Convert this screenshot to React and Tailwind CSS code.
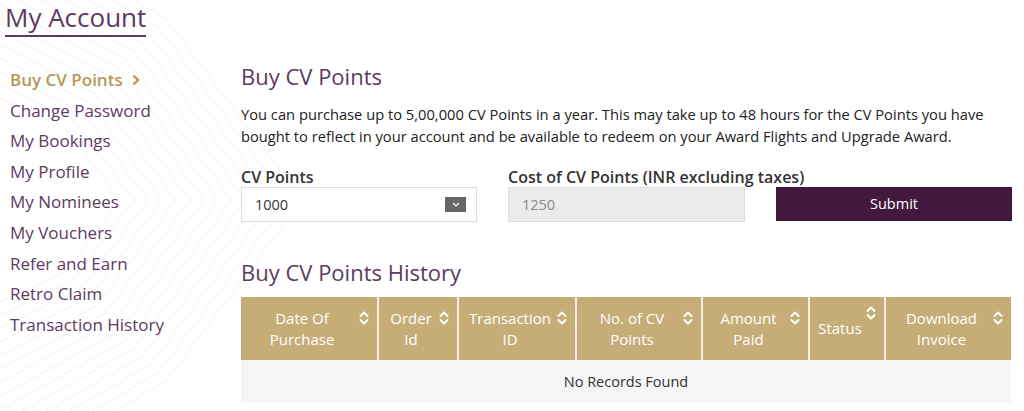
import React from 'react';

const menuItems = [
  'Buy CV Points',
  'Change Password',
  'My Bookings',
  'My Profile',
  'My Nominees',
  'My Vouchers',
  'Refer and Earn',
  'Retro Claim',
  'Transaction History',
];

const columns = [
  { label: ['Date Of', 'Purchase'], w: 'w-[136px]' },
  { label: ['Order', 'Id'], w: 'w-[80px]' },
  { label: ['Transaction', 'ID'], w: 'w-[118px]' },
  { label: ['No. of CV', 'Points'], w: 'w-[126px]' },
  { label: ['Amount', 'Paid'], w: 'w-[107px]' },
  { label: ['Status'], w: 'w-[76px]' },
  { label: ['Download', 'Invoice'], w: 'flex-1' },
];

function SortIcon() {
  return (
    <svg width="10" height="16" viewBox="0 0 10 16" className="shrink-0">
      <path d="M1.5 6 L5 2.5 L8.5 6" fill="none" stroke="#fff" strokeWidth="2" strokeLinecap="round" strokeLinejoin="round" />
      <path d="M1.5 10 L5 13.5 L8.5 10" fill="none" stroke="#fff" strokeWidth="2" strokeLinecap="round" strokeLinejoin="round" />
    </svg>
  );
}

// faint line pattern behind the menu
function SidebarPattern() {
  const lines = [];
  for (let i = 0; i < 14; i++) {
    const r = 120 + i * 14;
    lines.push(
      <polygon
        key={i}
        points={`${-40},${200 - r} ${r * 0.55},${200 - r * 0.6} ${r},${200} ${r * 0.55},${200 + r * 0.6} ${-40},${200 + r}`}
        fill="none"
        stroke="#f3f3f3"
        strokeWidth="1"
      />
    );
  }
  return (
    <svg className="absolute left-0 top-0 pointer-events-none" width="300" height="411" viewBox="0 0 300 411">
      {lines}
    </svg>
  );
}

export default function App() {
  return (
    <div className="relative w-[1024px] h-[411px] overflow-hidden bg-white" style={{ fontFamily: '"Open Sans", sans-serif' }}>
      <SidebarPattern />
      <div className="relative">
        <div className="pl-[5px]">
          <h1 className="inline-block text-[26px] leading-[34px] text-[#5c3b5f] border-b-2 border-[#5c3b5f] pb-[1px]">My Account</h1>
        </div>

        <div className="flex">
          {/* menu */}
          <ul className="w-[241px] shrink-0 pl-[10px] pt-[28px]">
            {menuItems.map((item, i) => (
              <li
                key={item}
                className={
                  i === 0
                    ? 'flex items-center gap-[9px] text-[17px] leading-[30.6px] font-semibold text-[#b69755]'
                    : 'text-[17px] leading-[30.6px] text-[#5c3b5f]'
                }
              >
                {item}
                {i === 0 && (
                  <svg width="8" height="12" viewBox="0 0 8 12">
                    <path d="M1.5 1.5 L6 6 L1.5 10.5" fill="none" stroke="#b69755" strokeWidth="2.4" />
                  </svg>
                )}
              </li>
            ))}
          </ul>

          {/* content */}
          <div className="w-[771px] pt-[24px]">
            <h2 className="text-[22px] leading-[30px] text-[#5c3b5f]">Buy CV Points</h2>
            <p className="mt-[12px] text-[14.7px] leading-[22px] text-[#222]">
              You can purchase up to 5,00,000 CV Points in a year. This may take up to 48 hours for the CV Points you have bought to reflect in your account and be available to redeem on your Award Flights and Upgrade Award.
            </p>

            <div className="mt-[20px] flex items-end">
              <div className="w-[236px]">
                <label className="block text-[16px] leading-[20px] font-semibold text-[#333]">CV Points</label>
                <div className="h-[35px] border border-[#ddd] bg-white flex items-center justify-between pl-[13px] pr-[10px]">
                  <span className="text-[14.5px] text-[#333]">1000</span>
                  <span className="w-[21px] h-[15px] bg-[#666] flex items-center justify-center">
                    <svg width="8" height="5" viewBox="0 0 8 5">
                      <path d="M1 1 L4 4 L7 1" fill="none" stroke="#fff" strokeWidth="1.2" />
                    </svg>
                  </span>
                </div>
              </div>
              <div className="ml-[31px] w-[237px]">
                <label className="block text-[16px] leading-[20px] font-semibold text-[#333] whitespace-nowrap">Cost of CV Points (INR excluding taxes)</label>
                <div className="h-[35px] border border-[#ddd] bg-[#ebebeb] flex items-center pl-[13px]">
                  <span className="text-[14.5px] text-[#888]">1250</span>
                </div>
              </div>
              <button className="ml-[31px] w-[236px] h-[34px] mb-[1px] bg-[#42193c] text-white text-[14.5px]">Submit</button>
            </div>

            <h2 className="mt-[35px] text-[22px] leading-[30px] text-[#5c3b5f]">Buy CV Points History</h2>

            <div className="mt-[10px] w-[770px]">
              <div className="flex h-[63px] bg-[#c6ad78]">
                {columns.map((col, i) => (
                  <div
                    key={i}
                    className={`${col.w} relative flex items-center justify-center pl-[6px] pr-[20px] ${i > 0 ? 'border-l-2 border-[#f3eee3]' : ''}`}
                  >
                    <div className="text-center text-[15px] leading-[21px] text-white">
                      {col.label.map((l) => (
                        <div key={l} className="whitespace-nowrap">{l}</div>
                      ))}
                    </div>
                    <div className={`absolute right-[8px] ${col.label.length === 1 ? 'top-[8px]' : 'top-[13px]'}`}>
                      <SortIcon />
                    </div>
                  </div>
                ))}
              </div>
              <div className="h-[43px] bg-[#f5f5f5] flex items-center justify-center text-[14.5px] text-[#333]">
                No Records Found
              </div>
            </div>
          </div>
        </div>
      </div>
    </div>
  );
}
